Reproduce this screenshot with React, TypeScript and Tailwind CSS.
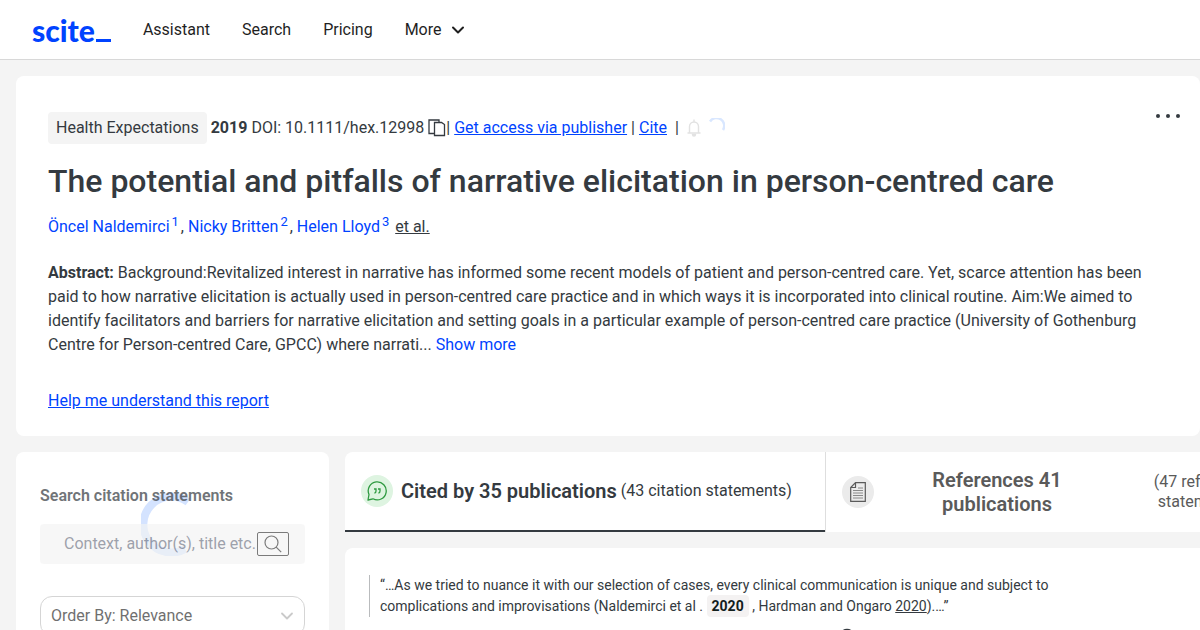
import React, { useState } from "react";
import { ChevronDown, CircleHelp } from "lucide-react";

const NAV_LINKS = ["Assistant", "Search", "Pricing"];

const AUTHORS = [
  { name: "Öncel Naldemirci", ref: 1 },
  { name: "Nicky Britten", ref: 2 },
  { name: "Helen Lloyd", ref: 3 },
];

const CopyIcon = () => (
  <svg width="18" height="18" viewBox="0 0 18 18" fill="none" stroke="currentColor" strokeWidth="1.3">
    <path d="M6.5 14.5H1V1h10v2" />
    <path d="M6.5 3.500h7l3 2v11h-10z" />
  </svg>
);

const BellIcon = () => (
  <svg width="14" height="18" viewBox="0 0 14 18" fill="none" stroke="currentColor" strokeWidth="1.4">
    <path d="M2.500 14V7.500a4.500 4.500 0 0 1 9 0V14M.5 14h13M7 3V.5" />
    <path d="M5.500 15.500a1.500 1.500 0 0 0 3 0z" fill="currentColor" />
  </svg>
);

const QuoteBubbleIcon = () => (
  <svg width="20" height="20" viewBox="0 0 20 20" fill="none" stroke="currentColor" strokeWidth="1.3">
    <path d="M1 19l1-5.500a9 9 0 1 1 4 4.300z" strokeLinejoin="round" />
    <path d="M7 8h2v2c0 1.200-.600 2-1.600 2.200M11 8h2v2c0 1.200-.600 2-1.600 2.200" />
  </svg>
);

const DocumentIcon = () => (
  <svg width="16" height="20" viewBox="0 0 16 20" fill="none">
    <path d="M5.500.7h9.800v18.600H.7V5.500zM5.500.7v4.800H.7" stroke="#5a5a5a" strokeWidth="1.200" />
    <path d="M8 6h5M3 8.500h10M3 11h10M3 13.500h10M3 16h10" stroke="#8a8a8a" />
  </svg>
);

const SearchIcon = () => (
  <svg width="18" height="18" viewBox="0 0 18 18" fill="none" stroke="currentColor" strokeWidth="1.200">
    <circle cx="7.500" cy="7.500" r="6.500" />
    <path d="M12.200 12.200l5 5" />
  </svg>
);

const Header: React.FC = () => (
  <header className="h-[60px] bg-white border-b border-[#d8d8d8] px-8 flex items-center gap-8 text-[#1f1f1f]">
    <a href="#" aria-label="scite_" className="flex items-end text-[#0043ff]">
      <span className="font-['Lato'] font-black text-[30px] leading-8">scite</span>
      {/* the trailing underscore of the wordmark */}
      <span className="w-[15px] h-[3px] mb-1 ml-px bg-[#0043ff]" />
    </a>
    <nav className="flex items-center gap-8">
      {NAV_LINKS.map((label) => (
        <a key={label} href="#">
          {label}
        </a>
      ))}
      <button type="button" className="flex items-center gap-1.5">
        More
        <ChevronDown size={20} strokeWidth={2.4} />
      </button>
    </nav>
  </header>
);

const ReportSummary: React.FC = () => (
  <section className="bg-white rounded-lg pl-8 pr-5 pt-9 pb-5 min-h-[360px]">
    <div className="flex items-center justify-between">
      <div className="flex items-center gap-1 whitespace-nowrap">
        <span className="bg-[#f4f4f4] rounded px-2 h-8 leading-8">Health Expectations</span>
        <strong>2019</strong>
        <span>DOI: 10.1111/hex.12998</span>
        <span className="flex items-center">
          <button type="button" aria-label="Copy DOI">
            <CopyIcon />
          </button>
          |
        </span>
        <a href="#" className="text-[#0043ff] underline">Get access via publisher</a>
        <span>|</span>
        <a href="#" className="text-[#0043ff] underline">Cite</a>
        <span className="ml-1">|</span>
        <button type="button" aria-label="Get notified" className="ml-1 text-[#e2e2e2]">
          <BellIcon />
        </button>
        <svg width="16" height="16" viewBox="0 0 16 16" className="ml-1 mb-1" fill="none">
          <path d="M1 3.500A7 7 0 0 1 14 12" stroke="#d9e7ff" strokeWidth="2.500" />
        </svg>
      </div>
      <button type="button" aria-label="More options" className="flex gap-1.5 mt-0.5 self-start">
        <span className="size-1 rounded-full bg-[#343a40]" />
        <span className="size-1 rounded-full bg-[#343a40]" />
        <span className="size-1 rounded-full bg-[#343a40]" />
      </button>
    </div>

    <h1 className="mt-[17px] text-[32px] leading-10 font-medium">
      The potential and pitfalls of narrative elicitation in person‐centred care
    </h1>

    <p className="mt-3.5 leading-6">
      {AUTHORS.map((author) => (
        <React.Fragment key={author.ref}>
          <a href="#" className="text-[#0043ff]">
            {author.name}
            <sup className="text-[13px] px-0.5">{author.ref}</sup>
          </a>
          {author.ref < AUTHORS.length ? ", " : " "}
        </React.Fragment>
      ))}
      <a href="#" className="underline">et al.</a>
    </p>

    <p className="mt-[22px] max-w-[1120px] leading-6">
      <strong>Abstract:</strong> Background:Revitalized interest in narrative has informed some recent models of patient
      and person‐centred care. Yet, scarce attention has been paid to how narrative elicitation is actually used in
      person‐centred care practice and in which ways it is incorporated into clinical routine. Aim:We aimed to identify
      facilitators and barriers for narrative elicitation and setting goals in a particular example of person‐centred
      care practice (University of Gothenburg Centre for Person‐centred Care, GPCC) where narrati...{" "}
      <button type="button" className="text-[#0043ff]">Show more</button>
    </p>

    <a href="#" className="inline-block mt-8 leading-6 text-[#0043ff] underline">
      Help me understand this report
    </a>
  </section>
);

const SearchPanel: React.FC = () => {
  const [query, setQuery] = useState("");

  return (
    <aside className="relative w-[313px] shrink-0 bg-white rounded-lg p-6 pt-8">
      <svg width="64" height="64" viewBox="0 0 64 64" fill="none" className="absolute left-[125px] top-10">
        <path d="M47 10A28 28 0 1 0 44 57" stroke="#d4e3ff" strokeWidth="8" />
      </svg>
      <div className="relative opacity-70">
        <label htmlFor="statement-search" className="block font-semibold leading-6">
          Search citation statements
        </label>
        <div className="mt-4 h-10 flex items-center rounded bg-[#f4f4f4]/90 pl-6 pr-4">
          <input
            id="statement-search"
            value={query}
            onChange={(e) => setQuery(e.target.value)}
            placeholder="Context, author(s), title etc."
            className="min-w-0 flex-1 bg-transparent outline-none placeholder:text-[#757a88]"
          />
          <button
            type="button"
            aria-label="Search"
            className="w-8 h-6 flex items-center justify-center rounded-xs border border-[#444] text-[#444]"
          >
            <SearchIcon />
          </button>
        </div>
        <div className="relative mt-8">
          <select
            aria-label="Order results"
            className="w-full h-10 appearance-none rounded-xl border border-[#c4c4c4] bg-white px-2.5 text-[#333]"
          >
            <option>Order By: Relevance</option>
          </select>
          <ChevronDown
            size={20}
            strokeWidth={2.2}
            className="pointer-events-none absolute right-2 top-2.5 text-[#b5b5b5]"
          />
        </div>
      </div>
    </aside>
  );
};

const CitationTabs: React.FC = () => (
  <div role="tablist" className="flex w-[961px] h-20 bg-white rounded-t-lg overflow-hidden">
    <button
      type="button"
      role="tab"
      aria-selected="true"
      className="w-[480px] shrink-0 flex items-center px-4 border-b-2 border-[#343a40]"
    >
      <span className="size-8 shrink-0 mr-2 rounded-full bg-[#def4e1] text-[#2f9a41] flex items-center justify-center">
        <QuoteBubbleIcon />
      </span>
      <span className="text-xl font-semibold mr-1">Cited by 35 publications</span>
      <span>(43 citation statements)</span>
    </button>
    <button
      type="button"
      role="tab"
      aria-selected="false"
      className="flex-1 flex items-center px-4 border-l border-[#dedede] text-[#5a5a5a]"
    >
      <span className="size-8 shrink-0 mr-2 rounded-full bg-[#ebebeb] flex items-center justify-center">
        <DocumentIcon />
      </span>
      <span className="w-[230px] px-8 text-xl leading-6 font-semibold">References 41 publications</span>
      <span className="flex-1 px-8 leading-5">(47 reference statements)</span>
    </button>
  </div>
);

const CitationStatement: React.FC = () => (
  <article className="mt-4 w-[961px] bg-white rounded-lg p-6">
    <blockquote className="mt-[3px] max-w-[700px] border-l border-[#b9bbbd] pl-2.5 text-sm leading-[21px]">
      “…As we tried to nuance it with our selection of cases, every clinical communication is unique and subject to
      complications and improvisations (Naldemirci et al .{" "}
      <strong className="rounded bg-[#f4f2f2] px-[5px] py-[3px] text-[#12201c]">2020</strong> , Hardman and Ongaro{" "}
      <a href="#" className="underline">2020</a>).…”
    </blockquote>
    <div className="mt-[11px] pl-[470px]">
      <button type="button" aria-label="About this statement" className="block">
        <CircleHelp size={16} />
      </button>
    </div>
  </article>
);

export default function App() {
  return (
    <div className="h-screen overflow-hidden bg-[#f4f4f4] font-['Roboto',sans-serif] text-base text-[#343a40]">
      <Header />
      <main className="pl-4 pt-4">
        <ReportSummary />
        <div className="mt-4 flex items-start gap-4">
          <SearchPanel />
          <div className="min-w-0">
            <CitationTabs />
            <CitationStatement />
          </div>
        </div>
      </main>
    </div>
  );
}
